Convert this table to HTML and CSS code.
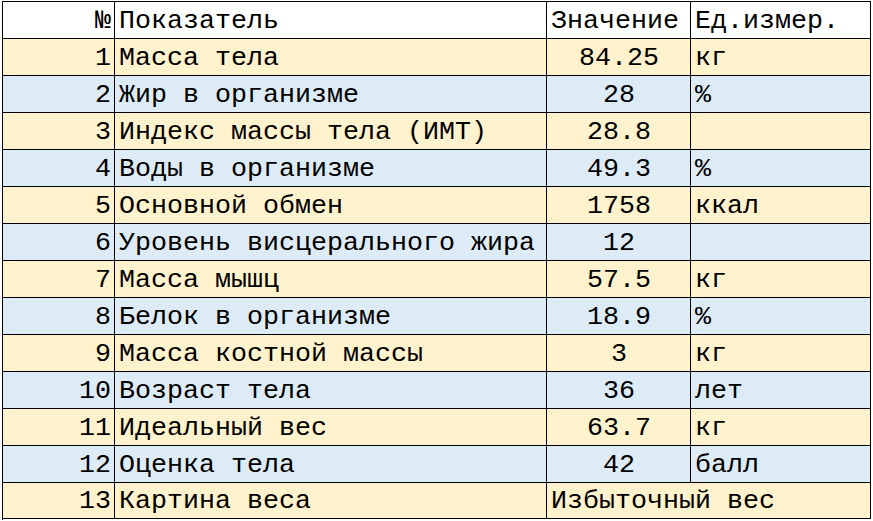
FILE: index.html
```html
<!DOCTYPE html>
<html lang="ru">
<head>
<meta charset="utf-8">
<title>Показатели</title>
<link rel="stylesheet" href="styles.css">
</head>
<body>
<div class="sheet">
  <div class="row head">
    <div class="c num">№</div><div class="c name">Показатель</div><div class="c val left">Значение</div><div class="c unit">Ед.измер.</div>
  </div>
  <div class="row y"><div class="c num">1</div><div class="c name">Масса тела</div><div class="c val">84.25</div><div class="c unit">кг</div></div>
  <div class="row b"><div class="c num">2</div><div class="c name">Жир в организме</div><div class="c val">28</div><div class="c unit">%</div></div>
  <div class="row y"><div class="c num">3</div><div class="c name">Индекс массы тела (ИМТ)</div><div class="c val">28.8</div><div class="c unit"></div></div>
  <div class="row b"><div class="c num">4</div><div class="c name">Воды в организме</div><div class="c val">49.3</div><div class="c unit">%</div></div>
  <div class="row y"><div class="c num">5</div><div class="c name">Основной обмен</div><div class="c val">1758</div><div class="c unit">ккал</div></div>
  <div class="row b"><div class="c num">6</div><div class="c name">Уровень висцерального жира</div><div class="c val">12</div><div class="c unit"></div></div>
  <div class="row y"><div class="c num">7</div><div class="c name">Масса мышц</div><div class="c val">57.5</div><div class="c unit">кг</div></div>
  <div class="row b"><div class="c num">8</div><div class="c name">Белок в организме</div><div class="c val">18.9</div><div class="c unit">%</div></div>
  <div class="row y"><div class="c num">9</div><div class="c name">Масса костной массы</div><div class="c val">3</div><div class="c unit">кг</div></div>
  <div class="row b"><div class="c num">10</div><div class="c name">Возраст тела</div><div class="c val">36</div><div class="c unit">лет</div></div>
  <div class="row y"><div class="c num">11</div><div class="c name">Идеальный вес</div><div class="c val">63.7</div><div class="c unit">кг</div></div>
  <div class="row b"><div class="c num">12</div><div class="c name">Оценка тела</div><div class="c val">42</div><div class="c unit">балл</div></div>
  <div class="row y last"><div class="c num">13</div><div class="c name">Картина веса</div><div class="c span">Избыточный вес</div></div>
</div>
</body>
</html>
```
FILE: styles.css
```css
html, body {
  margin: 0;
  padding: 0;
  background: #ffffff;
}
body {
  padding: 1px 0 0 2px;
}
.sheet {
  display: grid;
  grid-template-columns: 112px 432px 144px 180px;
  grid-auto-rows: 37px;
  width: max-content;
  border-left: 1px solid #000;
  border-top: 1px solid #000;
  font-family: "Liberation Mono", "DejaVu Sans Mono", monospace;
  font-size: 26.67px;
  color: #000;
}
.row {
  display: contents;
}
.c {
  box-sizing: border-box;
  border-right: 1px solid #000;
  border-bottom: 1px solid #000;
  line-height: 36px;
  padding: 1px 3px 0 4px;
  white-space: nowrap;
  overflow: hidden;
}
.last .c {
  height: 36px;
  line-height: 35px;
}
.head .c { background: #ffffff; }
.y .c { background: #fff2cc; }
.b .c { background: #ddebf7; }
.num { text-align: right; }
.val { text-align: center; }
.left { text-align: left; }
.span {
  grid-column: span 2;
  text-align: left;
}
```
